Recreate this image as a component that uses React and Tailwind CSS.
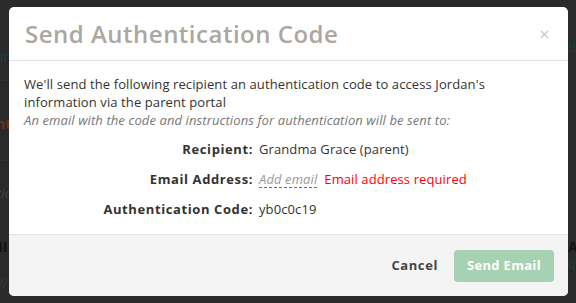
import React from 'react';
import { X } from 'lucide-react';

const font = { fontFamily: '"Open Sans", "Liberation Sans", sans-serif' };

export default function App() {
  return (
    <div className="relative w-[576px] h-[303px] overflow-hidden bg-[#2a2a2a]" style={font}>
      {/* page behind the overlay */}
      <div className="absolute inset-0 text-[13px]">
        <div className="absolute left-0 top-[46px] text-[#1d3f44] text-[14px]">im</div>
        <div className="absolute left-0 top-[80px] w-[9px] border-t border-[#333]" />
        <div className="absolute left-[-4px] top-[113px] text-[#6b3418] font-bold text-[14px]">nt</div>
        <div className="absolute left-0 top-[160px] w-[9px] border-t border-[#333]" />
        <div className="absolute left-[-3px] top-[184px] text-[#444] italic">tic</div>
        <div className="absolute left-[-2px] top-[236px] text-[#111] font-bold text-[14px]">II</div>
        <div className="absolute left-[-2px] top-[274px] text-[#3a3a3a] italic">//</div>
        <div className="absolute left-[568px] top-[36px] text-[#1d3f44] text-[14px]">is</div>
        <div className="absolute left-[568px] top-[236px] text-[#111] font-bold text-[14px]">A</div>
        <div className="absolute left-[568px] top-[255px] text-[#1d3f44] text-[12px]">q</div>
      </div>

      <div className="relative ml-[9px] mt-[7px] w-[559px] h-[289px] bg-white rounded-[5px] flex flex-col overflow-hidden">
        <div className="h-[54px] flex items-center justify-between pl-4 pr-[17px] border-b border-[#e5e5e5]">
          <h2 className="text-[24px] font-semibold text-[#aba7a2] tracking-[0.5px]">Send Authentication Code</h2>
          <X className="w-[13px] h-[13px] text-[#c4c4c4] mt-[2px]" strokeWidth={2} />
        </div>

        <div className="flex-1 px-[15px] pt-[14px] text-[13px] text-[#333] leading-[18px] tracking-[0.1px]">
          <p>We'll send the following recipient an authentication code to access Jordan's information via the parent portal</p>
          <p className="italic text-[#777]">An email with the code and instructions for authentication will be sent to:</p>

          <div className="mt-[11px] grid grid-cols-[229px_1fr] gap-x-[6px] gap-y-[12px] items-center">
            <div className="text-right font-bold text-[#333] tracking-[0.6px]">Recipient:</div>
            <div>Grandma Grace (parent)</div>
            <div className="text-right font-bold text-[#333] tracking-[0.6px]">Email Address:</div>
            <div className="flex items-center gap-[7px]">
              <span className="italic text-[#999] border-b border-dashed border-[#2f7db6] leading-[16px]">Add email</span>
              <span className="text-[#ff0000]">Email address required</span>
            </div>
            <div className="text-right font-bold text-[#333] tracking-[0.6px]">Authentication Code:</div>
            <div>yb0c0c19</div>
          </div>
        </div>

        <div className="h-[62px] bg-[#f4f4f4] border-t border-[#e3e3e3] flex items-center justify-end pr-[14px] gap-[16px]">
          <button className="text-[13px] font-bold text-[#444] tracking-[0.6px]">Cancel</button>
          <button className="w-[100px] h-[32px] rounded-[4px] bg-[#a7d2b2] text-white text-[13px] font-bold tracking-[0.3px]">Send Email</button>
        </div>
      </div>
    </div>
  );
}
